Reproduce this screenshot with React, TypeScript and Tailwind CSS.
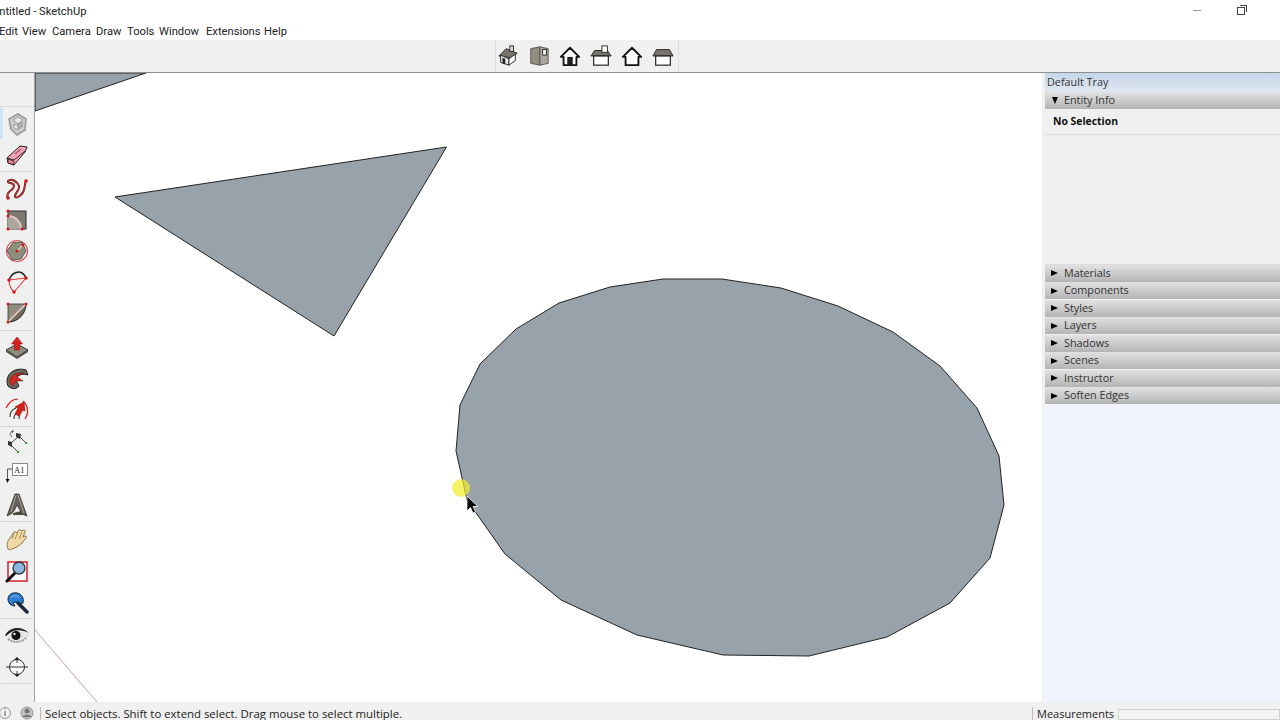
import React from "react";

const font = { fontFamily: '"Open Sans", "Noto Sans", sans-serif' };

const I = ({ children, w = 24, h = 24 }: { children: React.ReactNode; w?: number; h?: number }) => (
  <svg width={w} height={h} viewBox="0 0 24 24" className="block">{children}</svg>
);

const Select = () => (
  <I>
    <path d="M4 7l9-5 8 5-1 11-8 5-6-6z" fill="#cdcdcd" stroke="#9a9a9a" strokeWidth="1.6" />
    <path d="M8 8l5-3 5 3-5 4z" fill="#e6e6e6" stroke="#9a9a9a" />
    <path d="M9 12l4 2v4l-4-2z" fill="#f0f0f0" stroke="#9a9a9a" />
    <path d="M13 12l4-2v5l-4 2z" fill="#b0b0b0" stroke="#9a9a9a" />
  </I>
);
const Eraser = () => (
  <I>
    <path d="M2 15L15 3l7 1-2 5L9 22l-6-2z" fill="#f6a2b6" stroke="#222" strokeWidth="1" />
    <path d="M2 15l7 2 11-9" fill="none" stroke="#222" strokeWidth=".9" />
    <path d="M3 16l6 2-0.500 4-5.500-2z" fill="#ee7d99" stroke="#222" strokeWidth=".8" />
    <path d="M10 11l6-5" stroke="#9a5a6a" strokeWidth="1.200" />
  </I>
);
const Free = () => (
  <I>
    <path d="M3 21C0 14 9 14 9 9 9 5 2 7 3 4c3-3 9 0 11 5 1 4-5 8-4 11 2 2 8-3 9-7 1-4 1-7 2-9" fill="none" stroke="#6b1010" strokeWidth="2" />
    <path d="M3 21C0 14 9 14 9 9 9 5 2 7 3 4c3-3 9 0 11 5 1 4-5 8-4 11 2 2 8-3 9-7 1-4 1-7 2-9" fill="none" stroke="#e05050" strokeWidth=".8" />
    <circle cx="3" cy="21" r="1.800" fill="#d01818" />
    <circle cx="21" cy="4" r="1.800" fill="#d01818" />
  </I>
);
const Rect = () => (
  <I>
    <rect x="3" y="3" width="18" height="18" fill="#7d7b6e" stroke="#333" strokeWidth="1" />
    <path d="M3 7c8 0 14 6 14 14H3z" fill="#aaa89c" />
    <path d="M3 8c7 0 13 6 13 13" fill="none" stroke="#f2c9c9" strokeWidth="1.500" />
    <circle cx="3" cy="3" r="1.500" fill="#d01818" />
    <circle cx="3" cy="8" r="1.500" fill="#d01818" />
    <circle cx="3" cy="21" r="1.500" fill="#d01818" />
    <circle cx="17" cy="21" r="1.500" fill="#d01818" />
  </I>
);
const Poly = () => (
  <I>
    <circle cx="12" cy="12" r="10.500" fill="none" stroke="#d55" strokeWidth="1.200" />
    <path d="M8 3.500l9-.5 4 9-5 8-9 1-5-9z" fill="#8f8d7e" stroke="#444" strokeWidth=".8" />
    <path d="M12 12l7-7" stroke="#f2c9c9" strokeWidth="1.400" />
    <circle cx="12" cy="12" r="1.500" fill="#d01818" />
    <circle cx="18" cy="6" r="1.500" fill="#d01818" />
  </I>
);
const Arc = () => (
  <I>
    <path d="M4 10C6 5 10 2 14 2 17 2 20 5 21 8" fill="none" stroke="#222" strokeWidth="1.500" />
    <path d="M4 10L21 8 9 22M4 10c0 5 2 9 5 12" fill="none" stroke="#e04040" strokeWidth="1.100" />
    <circle cx="4" cy="10" r="1.700" fill="#d01818" />
    <circle cx="21" cy="8" r="1.700" fill="#d01818" />
    <circle cx="9" cy="22" r="1.700" fill="#d01818" />
  </I>
);
const Pie = () => (
  <I>
    <path d="M3 3h18L3 21z" fill="#8f8d7e" stroke="#333" strokeWidth=".8" />
    <path d="M21 3C21 12 14 21 3 21z" fill="#6f6d60" stroke="#222" strokeWidth="1" />
    <path d="M3 21L21 3" stroke="#f2c9c9" strokeWidth="1.600" />
    <circle cx="3" cy="3" r="1.500" fill="#d01818" />
    <circle cx="21" cy="3" r="1.500" fill="#d01818" />
    <circle cx="3" cy="21" r="1.500" fill="#d01818" />
  </I>
);
const Push = () => (
  <I>
    <path d="M1 14l11-6 11 6-11 7z" fill="#8f8d7e" stroke="#333" strokeWidth="1" />
    <path d="M1 14v2l11 7 11-7v-2l-11 7z" fill="#55534a" />
    <path d="M9.500 14V8H6.500L12 1l5.500 7h-3v6z" fill="#d6201a" stroke="#9a1510" strokeWidth=".6" />
  </I>
);
const Follow = () => (
  <I>
    <path d="M2 14C2 5 12 0 21 3l2 5c-6-2-11 0-12 5l3 6c-2 3-6 3-8 2-3-1-4-3-4-7z" fill="#6a685c" stroke="#222" strokeWidth="1" />
    <path d="M5 14c0-5 7-9 14-8l-8 3 7 5-7 0-3 5c-2-1-3-3-3-5z" fill="#d22a24" stroke="#7a1010" strokeWidth=".5" />
  </I>
);
const Offset = () => (
  <I>
    <path d="M1 10C4 4 9 1 13 1M18 3c5 4 6 12 2 18" fill="none" stroke="#d81b1b" strokeWidth="1.200" />
    <path d="M5 19c0-5 3-8 6-9M9 21c0-3 1-5 3-6M14 21c0-2 0-3 1-4" fill="none" stroke="#333" strokeWidth="1.100" />
    <path d="M10 16l3-6-3-1 9-5 1 9-2-1-4 6z" fill="#d6201a" stroke="#8a1010" strokeWidth=".6" />
  </I>
);
const Tape = () => (
  <I>
    <path d="M5 15L14 7M5 15l8 8M14 7l7 7" stroke="#444" strokeWidth="1" fill="none" />
    <path d="M11 4l5 1-1 5-4-2zM3 12l4 1 0 5-4-2z" fill="#333" />
    <path d="M9 2C5 2 4 6 7 8" fill="none" stroke="#666" strokeWidth="1" />
    <path d="M8 1v3l-2-1z" fill="#555" />
    <rect x="20" y="13" width="2" height="2" fill="#2ca02c" />
    <rect x="12" y="22" width="2" height="2" fill="#2ca02c" />
  </I>
);
const Text3 = () => (
  <svg width="24" height="24" viewBox="0 0 24 24" className="block">
    <rect x="7.500" y="3.500" width="15" height="12" fill="#fff" stroke="#888" />
    <text x="9" y="13" fontSize="8.500" fontFamily="Liberation Serif, serif" fill="#222">A1</text>
    <path d="M7 9H2.500v11" fill="none" stroke="#555" />
    <path d="M0.500 19h4l-2 4z" fill="#111" />
  </svg>
);
const Dim = () => (
  <I>
    <path d="M2 23L10 1h4l8 22-5-2-2-4-3-5-3 6-3 3z" fill="#66645a" stroke="#222" strokeWidth=".7" />
    <path d="M11 2l-5 17M13 2l6 18" stroke="#aaa89c" strokeWidth="1" fill="none" />
    <path d="M8 20l8-2 2 4-10 0z" fill="#4a483f" />
  </I>
);
const Hand = () => (
  <I>
    <path d="M3 20C1 15 3 11 5 9l4-6c1-1 2 0 2 1l3-3c1-1 2 0 2 1l3-1c1 0 2 1 1 2l-2 5 2-1c2 0 2 1 1 2l-4 5c-3 3-7 5-10 6-2 1-4 1-4 0z" fill="#f1d9a4" stroke="#8c7b50" strokeWidth="1" />
    <path d="M9 4L7 10M13 3l-3 7M17 3l-3 7" stroke="#8c7b50" strokeWidth=".8" />
  </I>
);
const Zoom = () => (
  <I>
    <rect x="3" y="3" width="19" height="19" fill="#fff" stroke="#d02028" strokeWidth="1.500" />
    <path d="M11 13L2 22" stroke="#111" strokeWidth="3" strokeLinecap="round" />
    <circle cx="14" cy="9" r="6" fill="#8ab4de" stroke="#333" strokeWidth="1.300" />
  </I>
);
const Prev = () => (
  <I>
    <path d="M3 9c0 4 3 7 7 7l-2-3 3-1 3 2 4-1c1-5-1-9-6-10C7 2 3 5 3 9z" fill="#2a7fd4" stroke="#123" strokeWidth="1" />
    <path d="M6 8c2-3 6-3 8 0" fill="none" stroke="#8cc0ee" strokeWidth="1" />
    <path d="M13 13l9 9" stroke="#1a2a3a" strokeWidth="3.500" strokeLinecap="round" />
  </I>
);
const Eye = () => (
  <I>
    <path d="M0 12C5 4 14 3 24 9c0 4-3 8-8 10-6 2-12-1-16-7z" fill="#e6e6e6" />
    <path d="M0 11C5 3 16 1 24 9 16 5 8 5 1 12z" fill="#222" />
    <circle cx="11" cy="11.500" r="4.500" fill="#111" />
    <circle cx="9.500" cy="10" r="1.200" fill="#eee" />
    <path d="M3 15c5 4 13 4 18-1" stroke="#999" strokeWidth="1.800" fill="none" strokeDasharray="2 1" />
  </I>
);
const Axes = () => (
  <I>
    <circle cx="12" cy="12" r="7.500" fill="#fff" stroke="#333" strokeWidth="1" />
    <path d="M1 12h22M12 5v3M12 16v3" stroke="#333" strokeWidth="1" />
    <path d="M9 5l3-3 3 3zM9 19l3 3 3-3z" fill="#222" />
  </I>
);

const HouseIso = () => (
  <I w={22} h={22}>
    <path d="M2 12L10 4l12 5-6 5z" fill="#77756a" stroke="#222" />
    <rect x="14" y="1" width="4" height="6" fill="#ddd" stroke="#222" />
    <path d="M4 11l9 4v7l-9-3z" fill="#e6e6e6" stroke="#222" />
    <path d="M13 15l7-5v7l-7 5z" fill="#fff" stroke="#222" />
    <path d="M6 14l3 1v6l-3-1z" fill="#222" />
  </I>
);
const HouseTop = () => (
  <I w={22} h={22}>
    <path d="M3 4l10-2v20L3 20z" fill="#8f8d7e" stroke="#55534a" />
    <path d="M13 2l9 2v16l-9 2z" fill="#aaa89c" stroke="#55534a" />
    <rect x="16" y="5" width="4" height="6" fill="#fff" stroke="#222" />
  </I>
);
const HouseFront = ({ door = true }: { door?: boolean }) => (
  <I w={22} h={22}>
    <path d="M12 3L2 13h3v9h14v-9h3z" fill="#fff" stroke="#111" strokeWidth="2" strokeLinejoin="round" />
    {door && <rect x="9" y="13" width="6" height="9" fill="#222" />}
  </I>
);
const HouseChimney = () => (
  <I w={22} h={22}>
    <path d="M1 12L5 6h14l4 6z" fill="#77756a" stroke="#222" />
    <rect x="13" y="1" width="6" height="7" fill="#fff" stroke="#222" />
    <rect x="4" y="12" width="16" height="10" fill="#fff" stroke="#222" strokeWidth="1.300" />
  </I>
);
const HouseFlat = () => (
  <I w={22} h={22}>
    <path d="M1 12L5 5h14l4 7z" fill="#77756a" stroke="#222" />
    <rect x="4" y="12" width="16" height="10" fill="#fff" stroke="#222" strokeWidth="1.300" />
  </I>
);

const Sep = ({ tight }: { tight?: boolean }) => (
  <div className={tight ? "h-px bg-[#d4d4d4] mx-[1px] mt-[1px] mb-[-2px]" : "h-px bg-[#d4d4d4] mx-[1px] my-[1px]"} />
);
const Tool = ({ children }: { children: React.ReactNode }) => (
  <div className="h-[31px] flex items-center justify-center">{children}</div>
);

const Header = ({ label, open }: { label: string; open?: boolean }) => (
  <div className="h-[17px] mb-[0.5px] flex items-center bg-gradient-to-b from-[#e2e2e2] to-[#b4b4b4] text-[10.800px] text-[#333] ml-[3px]">
    <span className="w-[19px] flex justify-center">
      {open ? (
        <span className="block w-0 h-0 border-l-[3.500px] border-r-[3.500px] border-t-[7px] border-l-transparent border-r-transparent border-t-black" />
      ) : (
        <span className="block w-0 h-0 border-t-[3.500px] border-b-[3.500px] border-l-[7px] border-t-transparent border-b-transparent border-l-black" />
      )}
    </span>
    {label}
  </div>
);

export default function App() {
  const ellipse =
    "663,279 722,279 781,288 838,306 893,332 940,366 977,408 999,456 1004,505 990,558 950,603 887,637 809,656 723,655 637,635 561,600 505,554 467,500 456,451 460,405 480,364 516,329 559,303 610,287";
  const menu = { fontFamily: 'Roboto, "Open Sans", sans-serif' };
  return (
    <div className="w-[1280px] h-[720px] overflow-hidden flex flex-col bg-white text-[#222]" style={font}>
      <div className="h-5 flex items-center justify-between shrink-0">
        <span className="text-[11.200px] ml-[-8px] mt-[5px]" style={menu}>Untitled - SketchUp</span>
        <div className="flex items-center gap-[36px] mr-[35px] mt-[1px]">
          <span className="block w-[8px] h-px bg-[#999]" />
          <span className="relative block w-[8px] h-[8px] border border-[#444]">
            <span className="absolute top-[-3px] right-[-3px] w-[7px] h-[7px] border-t border-r border-[#444]" />
          </span>
        </div>
      </div>
      <div className="h-5 flex items-center shrink-0 text-[11.200px] ml-[-1px] pt-[4px]" style={menu}>
        <span className="w-[23px]">Edit</span>
        <span className="w-[30px]">View</span>
        <span className="w-[44px]">Camera</span>
        <span className="w-[31px]">Draw</span>
        <span className="w-[32px]">Tools</span>
        <span className="w-[47px]">Window</span>
        <span className="w-[58px]">Extensions</span>
        <span>Help</span>
      </div>
      <div className="h-[33px] bg-[#f0f0f0] shrink-0 flex justify-start pl-[495px] border-b border-[#8f8f8f]">
        <div className="flex items-center gap-[9px] h-[32px] w-[184px] border-l border-r border-[#dcdcdc] pl-[1px]">
          <HouseIso />
          <HouseTop />
          <HouseFront />
          <HouseChimney />
          <HouseFront door={false} />
          <HouseFlat />
        </div>
      </div>
      <div className="flex-1 flex min-h-0">
        <div className="w-[35px] bg-[#f0f0f0] border-r border-[#a0a0a0] shrink-0 pt-[33px]">
          <div className="h-px border-t border-dotted border-[#c8c8c8] mb-[1px]" />
          <div className="relative">
            <span className="absolute left-0 top-0 w-[3px] h-[31px] bg-[#cce4f7]" />
            <Tool><Select /></Tool>
          </div>
          <Tool><Eraser /></Tool>
          <div className="h-px bg-[#d4d4d4] mx-[1px] mt-[1px] mb-[1px]" />
          <Tool><Free /></Tool>
          <Tool><Rect /></Tool>
          <Tool><Poly /></Tool>
          <Tool><Arc /></Tool>
          <Tool><Pie /></Tool>
          <div className="h-px bg-[#d4d4d4] mx-[1px] mb-[1px] mt-[2px]" />
          <Tool><Push /></Tool>
          <Tool><Follow /></Tool>
          <Tool><Offset /></Tool>
          <Sep tight />
          <Tool><Tape /></Tool>
          <Tool><Text3 /></Tool>
          <div className="mt-[2px]"><Tool><Dim /></Tool></div>
          <div className="h-px bg-[#d4d4d4] mx-[1px] mt-[1px] mb-[3px]" />
          <Tool><Hand /></Tool>
          <div className="mt-[-1px]"><Tool><Zoom /></Tool></div>
          <Tool><Prev /></Tool>
          <Sep />
          <Tool><Eye /></Tool>
          <Tool><Axes /></Tool>
          <Sep />
        </div>
        <div className="relative w-[1007px] shrink-0 bg-white">
          <svg viewBox="35 73 1007 629" width="1007" height="629" className="block">
            <polygon points="35,73 146,73 35,111" fill="#97a2aa" stroke="#222" strokeWidth="1" />
            <polygon points="115,197 446.500,147 334,336" fill="#97a2aa" stroke="#222" strokeWidth="1" />
            <polygon points={ellipse} fill="#97a2aa" stroke="#222" strokeWidth="1" />
            <line x1="35" y1="630" x2="97" y2="702" stroke="#c9a0a0" strokeWidth="1" />
            <circle cx="461" cy="488" r="9" fill="#f2ee2a" fillOpacity="0.7" />
            <path d="M467 496v15l3.500-3.500 2.500 5.500 2.500-1-2.500-5.500h5z" fill="#000" stroke="#fff" strokeWidth="0.800" />
          </svg>
        </div>
        <div className="flex-1 bg-[#f0f0f0] min-w-0 flex flex-col">
          <div className="h-[19px] ml-[3px] flex items-center pl-[2px] text-[10.800px] text-[#333] bg-gradient-to-b from-[#c6d6e9] to-[#dfe7f1]">Default Tray</div>
          <Header label="Entity Info" open />
          <div className="h-[24px] ml-[3px] flex items-center pl-[8px] text-[10.400px] font-bold text-[#111]">No Selection</div>
          <div className="h-px bg-[#dcdcdc] ml-[3px]" />
          <div className="h-[129px]" />
          <div className="h-px bg-[#dcdcdc] ml-[3px]" />
          <div className="flex flex-col">
            {["Materials", "Components", "Styles", "Layers", "Shadows", "Scenes", "Instructor", "Soften Edges"].map((l) => (
              <Header key={l} label={l} />
            ))}
          </div>
          <div className="flex-1 bg-[#eff3fb] ml-[1px]" />
        </div>
      </div>
      <div className="h-[18px] bg-[#f0f0f0] shrink-0 flex items-center overflow-hidden text-[11.400px] pt-[6px]">
        <svg width="36" height="14" viewBox="0 0 36 14" className="shrink-0 mt-[-2px]">
          <circle cx="5" cy="7" r="5.500" fill="none" stroke="#999" />
          <path d="M5 5v5M5 2.500v1" stroke="#888" strokeWidth="1.400" />
          <circle cx="27" cy="7" r="6" fill="#c2c2c2" stroke="#999" />
          <circle cx="27" cy="5" r="2.500" fill="#777" />
          <path d="M22.500 11c1-3 8-3 9 0z" fill="#777" />
        </svg>
        <span className="w-px h-[15px] bg-[#bbb] ml-[4px] mr-[4px] shrink-0" />
        <span className="shrink-0 w-[987px]">Select objects. Shift to extend select. Drag mouse to select multiple.</span>
        <span className="w-px h-[15px] bg-[#bbb] mr-[4px] shrink-0" />
        <span className="shrink-0 mr-[2px] w-[79px] text-[11px]">Measurements</span>
        <span className="flex-1 h-[11px] border border-[#d0d0d0] bg-[#f4f4f4]" />
      </div>
    </div>
  );
}
